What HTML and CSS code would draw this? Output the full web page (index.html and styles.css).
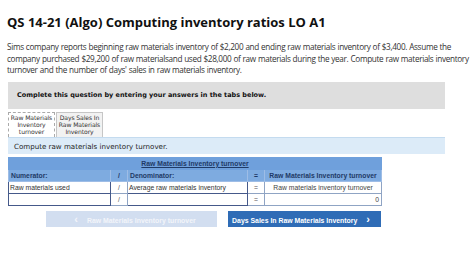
FILE: index.html
```html
<!doctype html>
<html lang="en">
  <head>
    <meta charset="utf-8">
    <title>QS 14-21</title>
    <link rel="stylesheet" href="styles.css">
  </head>
  <body>
    <h1 class="title">QS 14-21 (Algo) Computing inventory ratios LO A1</h1>
    <p class="question">Sims company reports beginning raw materials inventory of $2,200 and ending raw materials inventory of $3,400. Assume the company purchased $29,200 of raw materialsand used $28,000 of raw materials during the year. Compute raw materials inventory turnover and the number of days' sales in raw materials inventory.</p>

    <div class="note">Complete this question by entering your answers in the tabs below.</div>

    <div class="tabs">
      <div class="tab active">Raw Materials Inventory turnover</div>
      <div class="tab">Days Sales In Raw Materials Inventory</div>
    </div>
    <div class="prompt">Compute raw materials inventory turnover.</div>

    <table class="ratio">
      <colgroup>
        <col class="c-num">
        <col class="c-op">
        <col class="c-den">
        <col class="c-op">
        <col class="c-res">
      </colgroup>
      <tr class="caption">
        <th colspan="5"><u>Raw Materials Inventory turnover</u></th>
      </tr>
      <tr class="head">
        <th class="left">Numerator:</th>
        <th class="op">/</th>
        <th class="left">Denominator:</th>
        <th class="op">=</th>
        <th>Raw Materials Inventory turnover</th>
      </tr>
      <tr>
        <td class="cell">Raw materials used</td>
        <td class="op">/</td>
        <td class="cell">Average raw materials inventory</td>
        <td class="op">=</td>
        <td class="center">Raw materials inventory turnover</td>
      </tr>
      <tr>
        <td class="cell"></td>
        <td class="op">/</td>
        <td class="cell"></td>
        <td class="op">=</td>
        <td class="right">0</td>
      </tr>
    </table>

    <div class="nav">
      <button class="btn prev"><span class="chev">&lsaquo;</span> Raw Materials Inventory turnover</button>
      <button class="btn next">Days Sales In Raw Materials Inventory <span class="chev">&rsaquo;</span></button>
    </div>
  </body>
</html>
```

FILE: styles.css
```css
body {
    margin: 0;
    padding: 0 8px;
    font-family: "Open Sans", "Liberation Sans", sans-serif;
    color: #222;
}

.title {
    font-family: "Open Sans", "Liberation Sans", sans-serif;
    font-size: 13px;
    font-weight: bold;
    margin: 14px 0 0 -1px;
    line-height: 16px;
    color: #111;
}

.question {
    font-family: "Open Sans", "Liberation Sans", sans-serif;
    font-size: 8.2px;
    letter-spacing: -0.33px;
    word-spacing: 0.3px;
    line-height: 11.5px;
    margin: 11px 0 0 -1px;
    width: 462px;
    color: #333;
}

.note {
    width: 437px;
    box-sizing: border-box;
    margin-top: 6px;
    height: 27px;
    line-height: 27px;
    background: #dedede;
    padding-left: 9px;
    font-family: "DejaVu Sans", Verdana, sans-serif;
    font-size: 6.5px;
    font-weight: bold;
    color: #111;
}

.tabs {
    display: flex;
    margin-top: 3px;
    gap: 1px;
}

.tab {
    width: 47px;
    box-sizing: border-box;
    height: 25px;
    border: 1px solid #c6c6c6;
    border-bottom: none;
    background: #f2f2f2;
    font-family: "DejaVu Sans", Verdana, sans-serif;
    font-size: 6.1px;
    line-height: 7.4px;
    text-align: center;
    padding-top: 1px;
    color: #333;
    letter-spacing: -0.1px;
}

.tab.active {
    background: #fff;
    border: 1px dashed #aaa;
    border-bottom: none;
}

.prompt {
    width: 437px;
    box-sizing: border-box;
    height: 17px;
    line-height: 17px;
    background: #dcebf8;
    border-top: 1px solid #c4dbef;
    padding-left: 6px;
    font-family: "DejaVu Sans", Verdana, sans-serif;
    font-size: 7.1px;
    color: #222;
}

.ratio {
    margin-top: 3px;
    border-collapse: collapse;
    width: 373px;
    font-family: "Liberation Sans", Arial, sans-serif;
    font-size: 6.8px;
    table-layout: fixed;
}

.ratio .c-num {
    width: 102px;
}

.ratio .c-op {
    width: 17px;
}

.ratio .c-den {
    width: 120px;
}

.ratio .c-res {
    width: 117px;
}

.ratio th,
.ratio td {
    height: 11px;
    padding: 0 2px;
    border: 1px solid #8fa4c4;
    white-space: nowrap;
    overflow: hidden;
}

.ratio .caption th {
    background: #6fa0dc;
    color: #1f3a66;
    font-weight: bold;
    text-align: center;
    border-color: #6fa0dc;
}

.ratio .head th {
    background: #7eabe0;
    color: #1f3a66;
    font-weight: bold;
    text-align: center;
    border-color: #9ebde6;
}

.ratio .head th.left {
    text-align: left;
}

.ratio th.op,
.ratio td.op {
    text-align: center;
    color: #555;
}

.ratio .head th.op {
    color: #1f3a66;
}

.ratio td.cell {
    border: 1px solid #45598a;
    color: #333;
    padding-left: 1px;
}

.ratio td.center {
    text-align: center;
    color: #444;
}

.ratio td.right {
    text-align: right;
    color: #444;
}

.nav {
    display: flex;
    gap: 11px;
    margin: 5px 0 0 38px;
}

.btn {
    height: 16px;
    border: none;
    font-family: "Liberation Sans", Arial, sans-serif;
    font-size: 6.9px;
    font-weight: bold;
    padding: 0;
}

.prev {
    width: 171px;
    background: #d2def0;
    color: #f2f5fa;
}

.next {
    width: 153px;
    background: #2f6cb6;
    color: #fff;
}

.chev {
    font-size: 11px;
    margin: 0 7px;
}
```
